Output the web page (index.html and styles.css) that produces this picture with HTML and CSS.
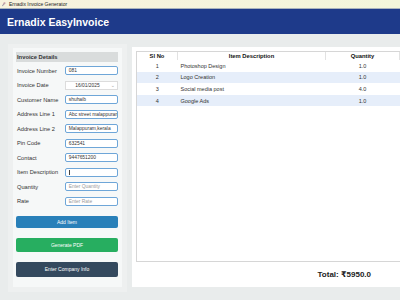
FILE: index.html
```html
<!DOCTYPE html>
<html lang="en">
<head>
    <meta charset="UTF-8">
    <meta name="viewport" content="width=device-width, initial-scale=1.0">
    <title>Ernadix Invoice Generator</title>
    <link rel="stylesheet" href="styles.css">
</head>
<body>
    <div class="titlebar">
        <svg class="app-icon" width="6" height="6" viewBox="0 0 6 6">
            <path d="M1 5 L3 1 L5 2 L3.4 3.2 Z" fill="#c8a0a8"/>
            <path d="M1 5 L3.4 3.2" stroke="#7a8aa0" stroke-width="0.6"/>
        </svg>
        <span>Ernadix Invoice Generator</span>
    </div>
    <header class="appbar">
        <h1>Ernadix EasyInvoice</h1>
    </header>
    <div class="main">
        <div class="side">
            <div class="form-panel">
                <div class="panel-title">Invoice Details</div>
                <ul class="form-rows">
                    <li><span class="label">Invoice Number</span><div class="field">081</div></li>
                    <li><span class="label">Invoice Date</span><div class="field date"><span>16/01/2025</span><span class="chev">&#8964;</span></div></li>
                    <li><span class="label">Customer Name</span><div class="field">shuhaib</div></li>
                    <li><span class="label">Address Line 1</span><div class="field">Abc street malappuram</div></li>
                    <li><span class="label">Address Line 2</span><div class="field">Malappuram,kerala</div></li>
                    <li><span class="label">Pin Code</span><div class="field">632541</div></li>
                    <li><span class="label">Contact</span><div class="field">9447651200</div></li>
                    <li><span class="label">Item Description</span><div class="field"><span class="caret"></span></div></li>
                    <li><span class="label">Quantity</span><div class="field empty">Enter Quantity</div></li>
                    <li><span class="label">Rate</span><div class="field empty">Enter Rate</div></li>
                </ul>
                <div class="actions">
                    <button class="btn btn-add">Add Item</button>
                    <button class="btn btn-pdf">Generate PDF</button>
                    <button class="btn btn-company">Enter Company Info</button>
                </div>
            </div>
        </div>
        <div class="content">
            <div class="table-box">
                <table class="items">
                    <thead>
                        <tr>
                            <th class="c-no">Sl No</th>
                            <th class="c-desc">Item Description</th>
                            <th class="c-qty">Quantity</th>
                            <th class="c-rest"></th>
                        </tr>
                    </thead>
                    <tbody>
                        <tr><td class="c-no">1</td><td class="c-desc">Photoshop Design</td><td class="c-qty">1.0</td><td class="c-rest"></td></tr>
                        <tr><td class="c-no">2</td><td class="c-desc">Logo Creation</td><td class="c-qty">1.0</td><td class="c-rest"></td></tr>
                        <tr><td class="c-no">3</td><td class="c-desc">Social media post</td><td class="c-qty">4.0</td><td class="c-rest"></td></tr>
                        <tr><td class="c-no">4</td><td class="c-desc">Google Ads</td><td class="c-qty">1.0</td><td class="c-rest"></td></tr>
                    </tbody>
                </table>
            </div>
            <div class="total">Total: ₹5950.0</div>
        </div>
    </div>
</body>
</html>
```

FILE: styles.css
```css
html,
body,
ul,
h1 {
    margin: 0;
    padding: 0;
}
ul {
    list-style: none;
}
body {
    width: 400px;
    height: 300px;
    overflow: hidden;
    background-color: #e9ecec;
    font-family: "Liberation Sans", Arial, "DejaVu Sans", sans-serif;
    color: #333;
}
.titlebar {
    height: 8px;
    border-bottom: 1px solid #a9b3bd;
    background: linear-gradient(to right, #f8f2de, #f3f6db);
    display: flex;
    align-items: center;
    gap: 2px;
    padding-left: 1px;
    font-size: 5px;
    color: #222;
}
.app-icon {
    display: block;
}
.appbar {
    height: 25px;
    background-color: #1e3a8a;
    display: flex;
    align-items: center;
    padding-left: 7px;
}
.appbar h1 {
    font-size: 10.5px;
    font-weight: bold;
    color: #fff;
}
.main {
    display: flex;
    align-items: flex-start;
    padding: 10px 0 0 8px;
}
.side {
    width: 109px;
    padding: 4px 5px 5px;
    background-color: #eef0f0;
    flex-shrink: 0;
}
.form-panel {
    background-color: #f6f8f8;
    padding: 4px 4px 10.5px 3px;
}
.panel-title {
    height: 10px;
    line-height: 10px;
    background-color: #d9dcdc;
    padding-left: 1px;
    font-size: 5.8px;
    font-weight: bold;
    color: #333;
}
.form-rows {
    margin-top: 4px;
    display: flex;
    flex-direction: column;
    gap: 5.5px;
}
.form-rows li {
    display: flex;
    align-items: center;
    height: 9px;
}
.label {
    width: 49px;
    padding-left: 1px;
    font-size: 5.7px;
    color: #333;
    white-space: nowrap;
}
.field {
    width: 49px;
    height: 7px;
    border: 1px solid #6ea6d8;
    border-radius: 2px;
    background-color: #fff;
    font-size: 4.9px;
    line-height: 7px;
    padding-left: 2.5px;
    overflow: hidden;
    white-space: nowrap;
    color: #333;
    display: flex;
    align-items: center;
}
.field.empty {
    color: #9a9a9a;
}
.field.date {
    border-color: #dcdcdc;
    border-radius: 0;
    padding-left: 9px;
    width: 42.5px;
    justify-content: space-between;
}
.chev {
    color: #999;
    font-size: 5px;
    padding-right: 2px;
    line-height: 4px;
}
.caret {
    width: 0.6px;
    height: 5px;
    background-color: #444;
}
.actions {
    margin-top: 10.5px;
    display: flex;
    flex-direction: column;
    gap: 10px;
}
.btn {
    display: block;
    width: 102px;
    border: none;
    border-radius: 2px;
    color: #fff;
    font-family: "Liberation Sans", Arial, sans-serif;
    font-size: 5px;
    padding: 0;
}
.btn-add {
    height: 12px;
    background-color: #2980b9;
}
.btn-pdf {
    height: 14px;
    background-color: #27ae60;
}
.btn-company {
    height: 14.5px;
    background-color: #34495e;
}
.content {
    margin: 3px 0 0 5px;
    width: 280px;
    height: 240px;
    flex-shrink: 0;
    background-color: #fff;
    padding: 4px 4px 0;
    box-sizing: border-box;
    display: flex;
    flex-direction: column;
}
.table-box {
    height: 211px;
    border: 1px solid #d6d6d6;
    border-right: none;
    box-sizing: border-box;
    overflow: hidden;
}
.items {
    border-collapse: collapse;
    table-layout: fixed;
    width: 330px;
    font-size: 5.5px;
    color: #333;
}
.items th {
    height: 8px;
    padding: 0;
    font-weight: bold;
    color: #111;
    font-size: 5.8px;
    text-align: center;
}
.items th + th {
    border-left: 1px solid #e2e2e2;
}
.items td {
    height: 11.6px;
    padding: 0;
}
.items tbody tr:nth-child(even) {
    background-color: #e6eefa;
}
.c-no {
    width: 40px;
    text-align: center;
}
.c-desc {
    width: 147px;
}
td.c-desc {
    padding-left: 3px;
}
.c-qty {
    width: 73px;
    text-align: center;
}
.c-rest {
    width: 70px;
}
.total {
    flex: 1;
    display: flex;
    align-items: center;
    justify-content: flex-end;
    padding-right: 37px;
    font-size: 8px;
    font-weight: bold;
    color: #222;
}
```
